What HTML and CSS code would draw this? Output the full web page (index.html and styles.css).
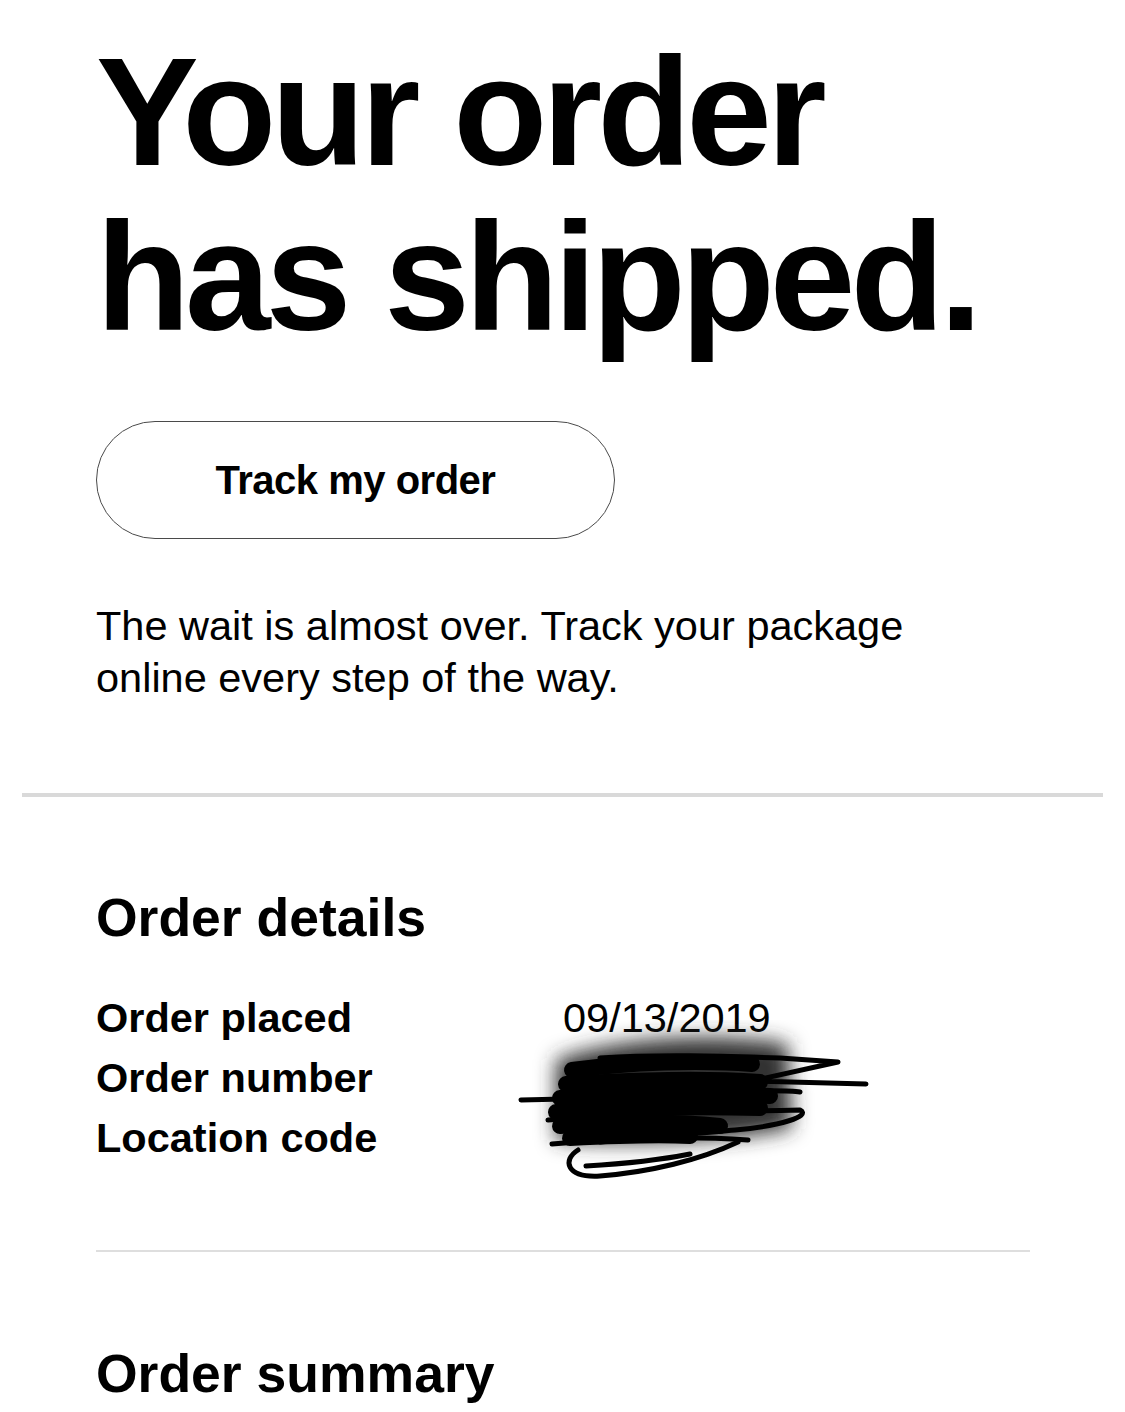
FILE: index.html
```html
<!DOCTYPE html>
<html lang="en">
<head>
    <meta charset="UTF-8">
    <meta name="viewport" content="width=device-width, initial-scale=1.0">
    <title>Your order has shipped</title>
    <link rel="stylesheet" href="styles.css">
</head>
<body>
    <div class="page">
        <section class="hero">
            <h1 class="hero-title">Your order has shipped.</h1>
            <a class="track-btn" href="#">Track my order</a>
            <p class="hero-text">The wait is almost over. Track your package online every step of the way.</p>
        </section>

        <hr class="divider-thick">

        <section class="block">
            <h2 class="block-title">Order details</h2>
            <div class="details-table">
                <div class="label">Order placed</div>
                <div class="value">09/13/2019</div>
                <div class="label">Order number</div>
                <div class="value"></div>
                <div class="label">Location code</div>
                <div class="value"></div>

                <!-- redaction scribble drawn over the values -->
                <svg class="scribble" width="360" height="170" viewBox="515 1020 360 170">
                    <defs>
                        <filter id="smudge" x="-30%" y="-30%" width="160%" height="160%">
                            <feGaussianBlur stdDeviation="10"/>
                        </filter>
                    </defs>
                    <path d="M556 1060 C620 1036 720 1032 788 1044 L792 1128 C740 1140 640 1146 556 1140 Z" fill="#333" filter="url(#smudge)"/>
                    <g fill="none" stroke="#000" stroke-linecap="round" stroke-linejoin="round">
                        <g stroke-width="16">
                            <path d="M572 1070 C630 1062 700 1060 752 1064"/>
                            <path d="M566 1084 C640 1080 700 1078 760 1082"/>
                            <path d="M560 1098 C630 1094 700 1094 770 1096"/>
                            <path d="M556 1112 C620 1108 690 1106 760 1108"/>
                            <path d="M560 1126 C620 1122 680 1122 720 1126"/>
                            <path d="M570 1138 C610 1136 650 1134 690 1136"/>
                        </g>
                        <g stroke-width="5">
                            <path d="M521 1100 L650 1097"/>
                            <path d="M600 1058 C660 1054 720 1056 780 1058 L838 1062 L752 1081 L866 1084"/>
                            <path d="M548 1120 C620 1114 700 1112 800 1110 C812 1116 780 1126 735 1130 C690 1134 640 1138 600 1142"/>
                            <path d="M578 1150 C562 1160 566 1178 600 1176 C650 1172 700 1160 738 1142"/>
                            <path d="M552 1144 C620 1138 690 1136 748 1140"/>
                            <path d="M586 1166 C620 1164 660 1160 690 1154"/>
                            <path d="M690 1094 C740 1090 790 1090 800 1092"/>
                        </g>
                    </g>
                </svg>
            </div>
        </section>

        <hr class="divider-thin">

        <section class="block summary">
            <h2 class="block-title">Order summary</h2>
        </section>
    </div>
</body>
</html>
```

FILE: styles.css
```css
/* CSS */
body {
    margin: 0;
    padding: 0;
    background-color: #fff;
    color: #000;
    font-family: "Liberation Sans", Arial, sans-serif;
}

.page {
    padding: 30px 22px 0;
}

.hero,
.block {
    padding: 0 73px 0 74px;
}

.hero-title {
    margin: 0;
    font-size: 154px;
    line-height: 165px;
    font-weight: 700;
    letter-spacing: -5px;
}

.track-btn {
    display: flex;
    align-items: center;
    justify-content: center;
    box-sizing: border-box;
    width: 519px;
    height: 118px;
    margin-top: 61px;
    border: 1.5px solid #4a4a4a;
    border-radius: 60px;
    color: #000;
    text-decoration: none;
    font-size: 40px;
    font-weight: 700;
    letter-spacing: -0.5px;
}

.hero-text {
    max-width: 860px;
    margin: 61px 0 0;
    font-size: 41.5px;
    line-height: 52px;
}

.divider-thick {
    margin: 89px 0 0;
    height: 4px;
    border: 0;
    background-color: #d9d9d9;
}

.divider-thin {
    margin: 82px 73px 0 74px;
    height: 2px;
    border: 0;
    background-color: #dedede;
}

.block-title {
    margin: 89px 0 0;
    font-size: 53.5px;
    line-height: 64px;
    font-weight: 700;
}

.summary .block-title {
    margin-top: 90px;
}

.details-table {
    position: relative;
    display: grid;
    grid-template-columns: 467px 1fr;
    margin-top: 38px;
    font-size: 41.5px;
    line-height: 60px;
}

.details-table .label {
    font-weight: 700;
}

.scribble {
    position: absolute;
    left: 419px;
    top: 32px;
}
```
